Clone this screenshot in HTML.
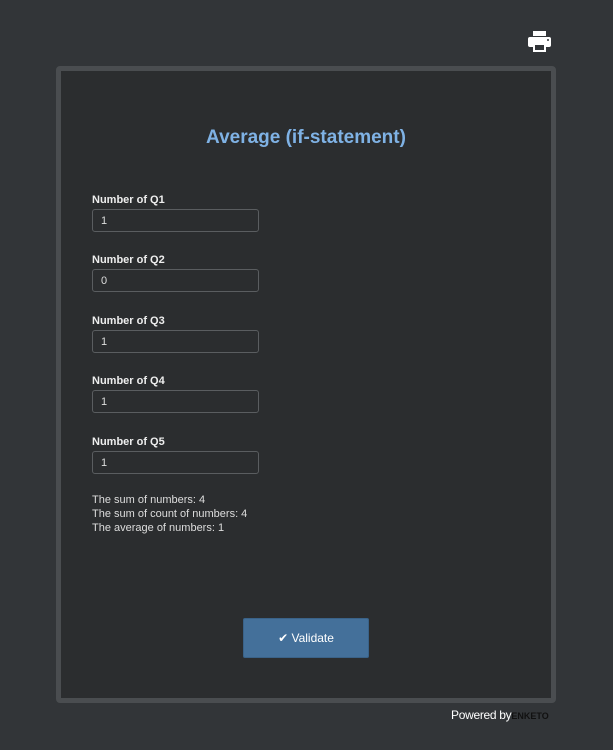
<!DOCTYPE html><html><head><style>
body{margin:0;width:613px;height:750px;background:#323538;font-family:"Liberation Sans",sans-serif;position:relative;overflow:hidden}
.card{position:absolute;left:56px;top:66px;width:490px;height:627px;border:5px solid #4a4d50;border-radius:4px;background:#2b2d2f}
h1{position:absolute;left:0;right:0;top:56px;margin:0;text-align:center;color:#7fb2e5;font-size:19px;font-weight:bold}
.l{position:absolute;left:31px;color:#eee;font-size:11px;font-weight:bold}
.i{position:absolute;left:31px;height:21px;border:1px solid #5a5d60;border-radius:3px;background:#2b2d2f;color:#ddd;font-size:11px;line-height:23px;padding-left:8px;width:157px}
.t{position:absolute;left:31px;top:422px;color:#ddd;font-size:11px;line-height:14px}
.b{position:absolute;left:182px;top:547px;width:124px;height:38px;background:#44709a;border:1px solid #3a6288;border-radius:2px;color:#fff;font-size:12px;text-align:center;line-height:38px}
</style></head><body>
<svg style="position:absolute;left:528px;top:31px" width="23" height="21" viewBox="0 0 23 21"><rect x="5" y="0" width="13" height="5" fill="#fff"/><rect x="0" y="6" width="23" height="10" rx="2" fill="#fff"/><rect x="5" y="13" width="13" height="8" fill="#fff"/><rect x="7" y="14" width="9" height="5" fill="#323538"/><circle cx="20" cy="9" r="1" fill="#323538"/></svg>
<div class="card">
<h1>Average (if-statement)</h1>
<div class="l" style="top:123px">Number of Q1</div><div class="i" style="top:138px">1</div>
<div class="l" style="top:183px">Number of Q2</div><div class="i" style="top:198px">0</div>
<div class="l" style="top:244px">Number of Q3</div><div class="i" style="top:259px">1</div>
<div class="l" style="top:304px">Number of Q4</div><div class="i" style="top:319px">1</div>
<div class="l" style="top:365px">Number of Q5</div><div class="i" style="top:380px">1</div>
<div class="t">The sum of numbers: 4<br>The sum of count of numbers: 4<br>The average of numbers: 1</div>
<div class="b">✔ Validate</div>
</div>
<div style="position:absolute;left:451px;top:708px;color:#fff;font-size:12px;letter-spacing:-0.3px">Powered by<span style="color:#111;font-weight:bold;font-size:9px;letter-spacing:0">ENKETO</span></div>
</body></html>
